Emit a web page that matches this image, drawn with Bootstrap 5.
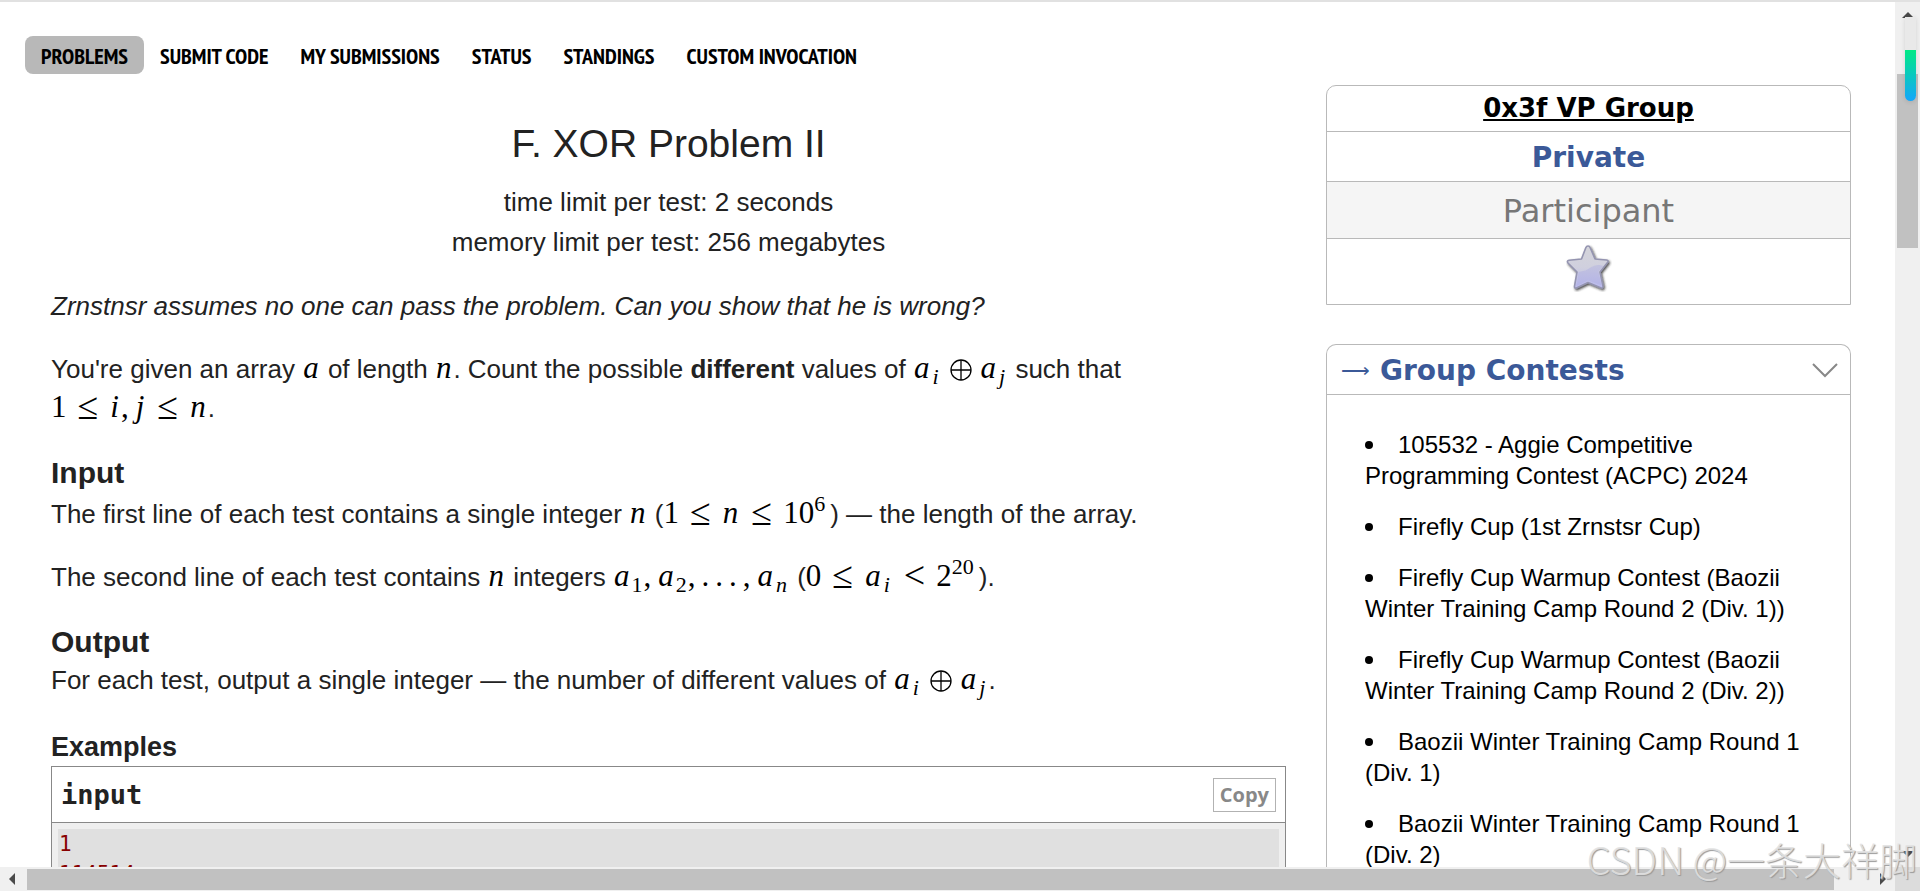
<!DOCTYPE html>
<html lang="en">
<head>
<meta charset="utf-8">
<meta name="viewport" content="width=device-width, initial-scale=1">
<title>F. XOR Problem II</title>
<link href="https://cdn.jsdelivr.net/npm/bootstrap@5.3.0/dist/css/bootstrap.min.css" rel="stylesheet">
<style>
  body { font-family: "Liberation Sans", Arial, sans-serif; color: #222; background: #fff; }
  a { color: inherit; }
  .window { border-top: 2px solid #e1e1e1; }
  .viewport { min-width: 0; padding: 34px 44px 0 25px; }

  .menu-bar { margin-bottom: 11px; font: bold 22px/38px "PT Sans Narrow", "Open Sans Condensed", "Roboto Condensed", "Noto Sans Condensed", Roboto, sans-serif; }
  .menu-bar .nav-link { padding: 2px 16px 0; line-height: 36px; color: #000; text-transform: uppercase; border-radius: 8px; white-space: nowrap; }
  .menu-bar .nav-link.active { background: #b8b8b8; }

  .page-row { gap: 40px; }
  .statement { min-width: 0; padding: 35px 0 0 26px; font-size: 26px; line-height: 39px; }
  .statement h1 { font-size: 39px; line-height: 48px; margin-bottom: 14px; font-weight: 400; }
  .limits { line-height: 40px; margin-bottom: 25px; }
  .statement p { margin-bottom: 24px; }
  .statement h2 { font-size: 30px; line-height: 36px; font-weight: 700; margin: 27px 0 1px; }
  .statement h3 { font-size: 27px; line-height: 32px; font-weight: 700; margin: 31px 0 3px; }
  .with-power { padding-top: 3px; }

  .tex { font-family: "Liberation Serif", serif; font-size: 31px; line-height: 0; color: #000; white-space: nowrap; }
  .tex i { padding: 0 2px 0 1px; }
  .tex sub, .tex sup { font-size: 22px; line-height: 0; position: static; }
  .tex sub { vertical-align: -6px; padding-right: 1px; }
  .tex sup { vertical-align: 12px; padding-right: 5px; }
  .rel { font-size: 38px; margin: 0 11px; vertical-align: -2px; }
  .punct { margin-right: 6px; }
  .oplus { width: 22px; height: 22px; margin: 0 8px; vertical-align: -3px; display: inline-block; }

  .sample { border: 1px solid #888; }
  .sample-head { height: 56px; padding: 0 9px; border-bottom: 1px solid #888; }
  .sample-title { font: bold 27px/36px "DejaVu Sans Mono", monospace; }
  .copy-btn { font: bold 20px/32px "Open Sans", sans-serif; color: #888; background: #fff; border: 1px solid #b2b2b2; padding: 0 6px; }
  .sample-body { background: #efefef; padding: 6px; }
  .sample-body pre { margin: 0; padding: 0 1px; background: #e0e0e0; color: #800; font: 21px/30px "DejaVu Sans Mono", monospace; }

  .side-col { flex: 0 0 525px; }
  .side-box { border: 1px solid #b9b9b9; border-radius: 10px 10px 0 0; font-family: "DejaVu Sans", Verdana, sans-serif; }
  .side-box > * + * { border-top: 1px solid #b9b9b9; }
  .group-name { font-size: 26px; line-height: 45px; font-weight: 700; color: #000; }
  .group-kind { padding-top: 2px; font-size: 28px; line-height: 47px; font-weight: 700; color: #3b5998; }
  .group-role { padding-top: 2px; font-size: 32px; line-height: 54px; color: #777; background: #f5f5f5; }
  .group-star { height: 66px; padding-top: 5px; }
  .contests { margin-top: 39px; border-bottom: 0; }
  .contests-head { padding: 2px 12px 0 14px; }
  .arrow { font-family: "Liberation Serif", serif; font-weight: 400; font-size: 20px; margin-right: 10px; }
  .contest-list { list-style: none; margin: 0; padding: 34px 38px 40px; font: 24px/31px "Liberation Sans", Arial, sans-serif; color: #000; }
  .contest-list li { margin-bottom: 20px; }
  .contest-list li::before { content: ""; display: inline-block; width: 8px; height: 8px; border-radius: 50%; background: #000; margin-right: 25px; vertical-align: 4px; }
  .contest-list a { text-decoration: none; }

  .vbar { flex: 0 0 25px; background: #f0f0f0; padding: 10px 2px; }
  .vbar svg, .hbar svg { display: block; flex: none; fill: #4a4a4a; }
  .vthumb { height: 20.6%; margin-top: 56px; background: #c1c1c1; align-self: stretch; }
  .hbar { flex: 0 0 24px; background: #f0f0f0; padding-left: 9px; }
  .hthumb { height: 21px; margin: 0 46px 0 12px; background: #c1c1c1; }
  .corner { width: 25px; margin-left: 9px; background: #dcdcdc; }
  .gauge { position: absolute; top: 15px; right: 4px; width: 11px; height: 84px; border-radius: 0 0 6px 6px; box-shadow: 0 1px 5px rgba(0,0,0,.12);
    background: linear-gradient(#e9e9e9 0 33px, #00e985 33px, #14a6fb); }
  .watermark { position: absolute; right: 3px; bottom: 10px; font: 300 38px/44px "Noto Sans CJK SC", sans-serif; color: rgba(226,226,226,.9); text-shadow: 1px 1px 1px #999; white-space: nowrap; pointer-events: none; }
</style>
<script src="https://cdn.jsdelivr.net/npm/bootstrap@5.3.0/dist/js/bootstrap.bundle.min.js"></script>
</head>
<body>
<svg class="d-none">
  <symbol id="oplus" viewBox="0 0 22 22"><circle cx="11" cy="11" r="10" fill="none" stroke="#000" stroke-width="1.3"/><path d="M11 1v20M1 11h20" stroke="#000" stroke-width="1.3"/></symbol>
</svg>
<div class="window vh-100 d-flex flex-column overflow-hidden position-relative">
  <div class="d-flex flex-grow-1 overflow-hidden">
    <div class="viewport flex-grow-1 overflow-hidden">
      <nav class="menu-bar">
        <ul class="nav flex-nowrap">
          <li class="nav-item"><a class="nav-link active" href="#">Problems</a></li>
          <li class="nav-item"><a class="nav-link" href="#">Submit Code</a></li>
          <li class="nav-item"><a class="nav-link" href="#">My Submissions</a></li>
          <li class="nav-item"><a class="nav-link" href="#">Status</a></li>
          <li class="nav-item"><a class="nav-link" href="#">Standings</a></li>
          <li class="nav-item"><a class="nav-link" href="#">Custom Invocation</a></li>
        </ul>
      </nav>

      <div class="page-row d-flex align-items-start">
        <main class="statement flex-grow-1">
          <header class="text-center">
            <h1>F. XOR Problem II</h1>
            <div class="limits">
              <div>time limit per test: 2 seconds</div>
              <div>memory limit per test: 256 megabytes</div>
            </div>
          </header>
          <p><em>Zrnstnsr assumes no one can pass the problem. Can you show that he is wrong?</em></p>
          <p>You're given an array <span class="tex"><i>a</i></span> of length <span class="tex"><i>n</i></span>. Count the possible <strong>different</strong> values of <span class="tex"><i>a</i><sub><i>i</i></sub><svg class="oplus" role="img" aria-label="xor"><use href="#oplus"/></svg><i>a</i><sub><i>j</i></sub></span> such that<br><span class="tex">1<span class="rel">≤</span><i>i</i><span class="punct">,</span><i>j</i><span class="rel">≤</span><i>n</i></span>.</p>

          <h2>Input</h2>
          <p class="with-power">The first line of each test contains a single integer <span class="tex"><i>n</i></span> (<span class="tex">1<span class="rel">≤</span><i>n</i><span class="rel">≤</span>10<sup>6</sup></span>) — the length of the array.</p>
          <p>The second line of each test contains <span class="tex"><i>n</i></span> integers <span class="tex"><i>a</i><sub>1</sub><span class="punct">,</span><i>a</i><sub>2</sub><span class="punct">,</span><span class="punct">.</span><span class="punct">.</span><span class="punct">.</span><span class="punct">,</span><i>a</i><sub><i>n</i></sub></span> (<span class="tex">0<span class="rel">≤</span><i>a</i><sub><i>i</i></sub><span class="rel">&lt;</span>2<sup>20</sup></span>).</p>

          <h2>Output</h2>
          <p>For each test, output a single integer — the number of different values of <span class="tex"><i>a</i><sub><i>i</i></sub><svg class="oplus" role="img" aria-label="xor"><use href="#oplus"/></svg><i>a</i><sub><i>j</i></sub></span>.</p>

          <h3>Examples</h3>
          <section class="sample">
            <div class="sample-head d-flex align-items-center justify-content-between">
              <span class="sample-title">input</span>
              <button type="button" class="copy-btn">Copy</button>
            </div>
            <div class="sample-body"><pre>1
114514</pre></div>
          </section>
        </main>

        <aside class="side-col">
          <section class="side-box text-center">
            <div class="group-name"><a href="#">0x3f VP Group</a></div>
            <div class="group-kind">Private</div>
            <div class="group-role">Participant</div>
            <div class="group-star">
              <svg width="46" height="48" viewBox="0 0 46 48" role="img" aria-label="Star">
                <defs>
                  <linearGradient id="starFill" x1="0" y1="0" x2="0" y2="1"><stop offset="0" stop-color="#d4d4da"/><stop offset=".5" stop-color="#d0d0de"/><stop offset="1" stop-color="#b9b9ee"/></linearGradient>
                  <filter id="starShade" x="-20%" y="-20%" width="140%" height="140%"><feDropShadow dx="1.2" dy="1.5" stdDeviation="1.2" flood-color="#222" flood-opacity=".8"/></filter>
                </defs>
                <path filter="url(#starShade)" fill="url(#starFill)" stroke="#9494b0" stroke-width="1.6" stroke-linejoin="round" d="M22 2q1.500 0 2.200 1.800L29 15l11.500 1q2.800.6.800 2.800L34 28l3 14q.2 2.600-2.400 1.800L22 38.500 10.500 44q-2.400.6-2-1.800L11 28 2 19q-1.600-2.300 1-2.800L15.500 15l4.300-11.200Q20.500 2 22 2z"/>
                <path fill="#a9a9e0" opacity=".4" d="M12.500 28q8-1 12-4.500 4-3 9-2.500l4 1-5 5.500 3 14L22 36.500 10.500 42z"/>
              </svg>
            </div>
          </section>

          <section class="side-box contests">
            <div class="contests-head group-kind d-flex align-items-center">
              <span class="arrow">⟶</span><span class="flex-grow-1">Group Contests</span>
              <svg width="26" height="15" viewBox="0 0 26 15" fill="none" stroke="#888" stroke-width="2" role="img" aria-label="Toggle"><path d="M1 1l12 12L25 1"/></svg>
            </div>
            <ul class="contest-list">
              <li><a href="#">105532 - Aggie Competitive Programming Contest (ACPC) 2024</a></li>
              <li><a href="#">Firefly Cup (1st Zrnstsr Cup)</a></li>
              <li><a href="#">Firefly Cup Warmup Contest (Baozii Winter Training Camp Round 2 (Div. 1))</a></li>
              <li><a href="#">Firefly Cup Warmup Contest (Baozii Winter Training Camp Round 2 (Div. 2))</a></li>
              <li><a href="#">Baozii Winter Training Camp Round 1 (Div. 1)</a></li>
              <li><a href="#">Baozii Winter Training Camp Round 1 (Div. 2)</a></li>
            </ul>
          </section>
        </aside>
      </div>
    </div>

    <div class="vbar d-flex flex-column align-items-center" aria-hidden="true">
      <svg width="12" height="6"><path d="M6 0l6 6H0z"/></svg>
      <div class="vthumb"></div>
      <svg class="mt-auto" width="12" height="6"><path d="M0 0h12L6 6z"/></svg>
    </div>
  </div>

  <div class="hbar d-flex align-items-center" aria-hidden="true">
    <svg width="6" height="12"><path d="M6 0v12L0 6z"/></svg>
    <div class="hthumb flex-grow-1"></div>
    <svg width="6" height="12"><path d="M0 0v12l6-6z"/></svg>
    <div class="corner align-self-stretch"></div>
  </div>

  <div class="gauge"></div>
  <div class="watermark">CSDN @一条大祥脚</div>
</div>
</body>
</html>
